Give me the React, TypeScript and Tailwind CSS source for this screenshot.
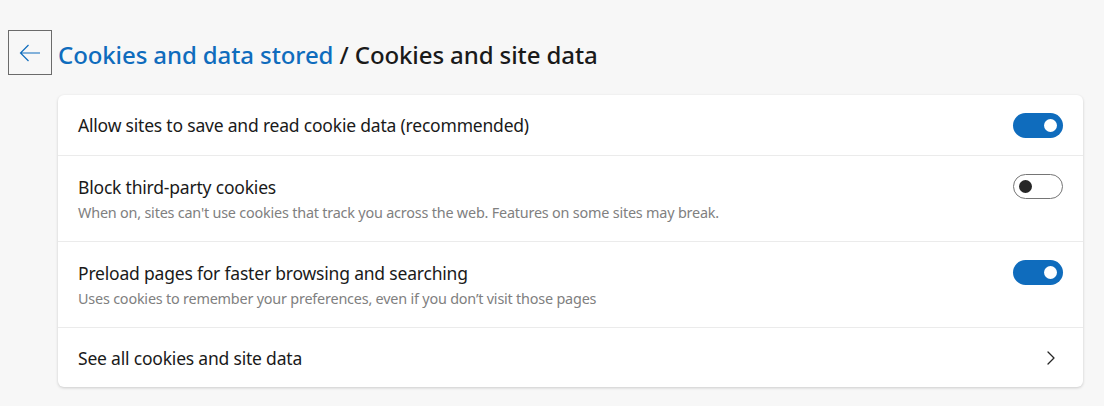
import { ChevronRight } from "lucide-react";

type Row = {
  title: string;
  desc?: string;
  toggle?: boolean;
  link?: boolean;
};

const rows: Row[] = [
  { title: "Allow sites to save and read cookie data (recommended)", toggle: true },
  {
    title: "Block third-party cookies",
    desc: "When on, sites can't use cookies that track you across the web. Features on some sites may break.",
    toggle: false,
  },
  {
    title: "Preload pages for faster browsing and searching",
    desc: "Uses cookies to remember your preferences, even if you don\u2019t visit those pages",
    toggle: true,
  },
  { title: "See all cookies and site data", link: true },
];

function Toggle({ on }: { on: boolean }) {
  if (on) {
    return (
      <div className="w-[50px] h-[25px] rounded-full bg-[#0f6cbd] flex items-center justify-end pr-[6px]">
        <div className="w-[13px] h-[13px] rounded-full bg-white" />
      </div>
    );
  }
  return (
    <div className="w-[50px] h-[25px] rounded-full border border-[#757575] bg-white flex items-center pl-[5px]">
      <div className="w-[13px] h-[13px] rounded-full bg-[#262626]" />
    </div>
  );
}

export default function App() {
  return (
    <div
      className="w-[1104px] h-[406px] bg-[#f7f7f7] overflow-hidden"
      style={{ fontFamily: '"Noto Sans", "Open Sans", sans-serif' }}
    >
      <div className="flex items-center pt-[30px] pl-[8px]">
        <button className="w-[44px] h-[45px] border border-[#6b6b6b] flex items-center justify-center text-[#0f6cbd]">
          <svg width="22" height="18" viewBox="0 0 22 18" fill="none" stroke="currentColor" strokeWidth="1.2">
            <path d="M21 9H1.5M9.5 1L1.5 9l8 8" />
          </svg>
        </button>
        <h1 className="ml-[6px] mt-[4px] text-[24px] tracking-[-0.1px] font-medium text-[#1a1a1a] leading-none">
          <span className="text-[#0f6cbd]">Cookies and data stored</span> / Cookies and site data
        </h1>
      </div>

      <div className="ml-[58px] mt-[20px] w-[1025px] bg-white rounded-[6px] shadow-[0_1px_3px_rgba(0,0,0,0.18)]">
        {rows.map((row, i) => (
          <div
            key={row.title}
            className={`flex items-center justify-between pl-[20px] pr-[20px] ${
              row.desc ? "h-[86px]" : "h-[60px]"
            } ${i > 0 ? "border-t border-[#ebebeb]" : ""}`}
          >
            <div>
              <div className="text-[17.5px] leading-[24px] text-[#1a1a1a] tracking-[-0.2px]">{row.title}</div>
              {row.desc && (
                <div className="text-[14.4px] leading-[20px] text-[#808080] mt-[4px] tracking-[-0.2px]">{row.desc}</div>
              )}
            </div>
            <div className={row.desc ? "self-start mt-[18px]" : ""}>
              {row.link ? (
                <ChevronRight size={24} strokeWidth={1.3} className="text-[#262626]" />
              ) : (
                <Toggle on={!!row.toggle} />
              )}
            </div>
          </div>
        ))}
      </div>
    </div>
  );
}
